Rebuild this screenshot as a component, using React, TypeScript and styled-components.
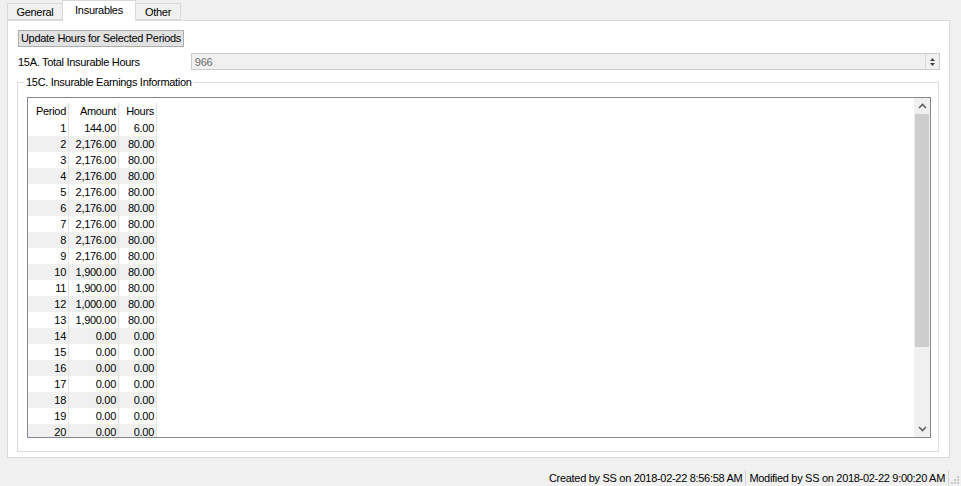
import React from "react";
import styled, { createGlobalStyle } from "styled-components";

const Global = createGlobalStyle`
  html, body { margin: 0; padding: 0; background: #f0f0f0; }
  body { font-family: "Liberation Sans", Arial, sans-serif; font-size: 11px; letter-spacing: -0.3px; color: #000; }
  * { box-sizing: border-box; }
`;

const Window = styled.div`
  width: 961px;
  height: 486px;
  background: #f0f0f0;
  display: flex;
  flex-direction: column;
  overflow: hidden;
`;

const TabBar = styled.div`
  height: 20px;
  padding-left: 8px;
  display: flex;
  align-items: flex-end;
  position: relative;
  z-index: 1;
`;

const Tab = styled.div<{ $active?: boolean; $w: number }>`
  height: ${(p) => (p.$active ? "21px" : "17px")};
  margin-bottom: ${(p) => (p.$active ? "-1px" : "0")};
  padding-top: ${(p) => (p.$active ? "3px" : "2px")};
  background: ${(p) => (p.$active ? "#ffffff" : "#f0f0f0")};
  border: 1px solid #d9d9d9;
  border-bottom: ${(p) => (p.$active ? "none" : "1px solid #d9d9d9")};
  margin-left: -1px;
  white-space: nowrap;
  width: ${(p) => p.$w}px;
  text-align: center;
`;

const Panel = styled.div`
  margin-left: 7px;
  width: 943px;
  height: 438px;
  background: #ffffff;
  border: 1px solid #d9d9d9;
  padding: 9px 9px 0 9px;
  display: flex;
  flex-direction: column;
`;

const Button = styled.button`
  align-self: flex-start;
  margin-left: 1px;
  width: 166px;
  height: 17px;
  padding: 0;
  background: #e1e1e1;
  border: 1px solid #adadad;
  font: inherit;
  letter-spacing: inherit;
  color: #000;
  line-height: 15px;
  white-space: nowrap;
`;

const FieldRow = styled.div`
  margin-top: 6px;
  display: flex;
  align-items: center;
  height: 17px;
  padding-left: 1px;
`;

const Label = styled.span`
  width: 173px;
  white-space: nowrap;
`;

const SpinBox = styled.div`
  width: 750px;
  height: 17px;
  background: #f0f0f0;
  border: 1px solid #cccccc;
  display: flex;
  align-items: center;
  justify-content: space-between;
  padding-left: 3px;
  color: #6d6d6d;
`;

const SpinArrows = styled.div`
  width: 14px;
  height: 15px;
  border-left: 1px solid #d9d9d9;
  display: flex;
  flex-direction: column;
  align-items: center;
  justify-content: center;
  gap: 2px;
`;

const Group = styled.fieldset`
  margin: 6px 1px 0 0;
  width: 922px;
  height: 376px;
  border: 1px solid #dcdcdc;
  padding: 8px 8px 8px 9px;
  min-width: 0;
`;

const Legend = styled.legend`
  margin-left: -3px;
  padding: 0 2px;
  line-height: 13px;
`;

const TableFrame = styled.div`
  width: 904px;
  height: 341px;
  border: 1px solid #828790;
  background: #ffffff;
  display: flex;
`;

const Grid = styled.div`
  flex: 1;
  overflow: hidden;
`;

const Row = styled.div<{ $head?: boolean }>`
  display: flex;
  height: ${(p) => (p.$head ? "22px" : "16px")};
  padding-top: ${(p) => (p.$head ? "4px" : "0")};
`;

const Cell = styled.div<{ $w: number; $alt?: boolean }>`
  width: ${(p) => p.$w}px;
  padding-right: 2px;
  height: 100%;
  display: flex;
  align-items: center;
  justify-content: flex-end;
  background: ${(p) => (p.$alt ? "#f0f0f0" : "#ffffff")};
  border-right: 1px solid #e3e3e3;
  white-space: nowrap;
`;

const ScrollBar = styled.div`
  width: 16px;
  background: #f0f0f0;
  display: flex;
  flex-direction: column;
`;

const ScrollBtn = styled.div`
  height: 16px;
  display: flex;
  align-items: center;
  justify-content: center;
`;

const Track = styled.div`
  flex: 1;
  display: flex;
  flex-direction: column;
`;

const Thumb = styled.div`
  height: 233px;
  margin: 0 1px;
  background: #cdcdcd;
`;

const StatusBar = styled.div`
  flex: 1;
  display: flex;
  justify-content: flex-end;
  align-items: flex-end;
  padding-bottom: 0;
`;

const StatusItem = styled.div`
  padding: 0 3px;
  height: 16px;
  line-height: 16px;
  border-right: 1px solid #d4d4d4;
  white-space: nowrap;
`;

const Grip = styled.div`
  width: 12px;
  height: 16px;
  display: flex;
  align-items: flex-end;
  justify-content: flex-end;
  padding: 0 2px 2px 0;
`;

const cols = [41, 50, 38];

const data: [number, string, string][] = [
  [1, "144.00", "6.00"],
  [2, "2,176.00", "80.00"],
  [3, "2,176.00", "80.00"],
  [4, "2,176.00", "80.00"],
  [5, "2,176.00", "80.00"],
  [6, "2,176.00", "80.00"],
  [7, "2,176.00", "80.00"],
  [8, "2,176.00", "80.00"],
  [9, "2,176.00", "80.00"],
  [10, "1,900.00", "80.00"],
  [11, "1,900.00", "80.00"],
  [12, "1,000.00", "80.00"],
  [13, "1,900.00", "80.00"],
  [14, "0.00", "0.00"],
  [15, "0.00", "0.00"],
  [16, "0.00", "0.00"],
  [17, "0.00", "0.00"],
  [18, "0.00", "0.00"],
  [19, "0.00", "0.00"],
  [20, "0.00", "0.00"],
];

const Chevron = ({ up }: { up?: boolean }) => (
  <svg width="9" height="6" viewBox="0 0 9 6">
    <path
      d={up ? "M1 5 L4.5 1.5 L8 5" : "M1 1 L4.5 4.5 L8 1"}
      fill="none"
      stroke="#606060"
      strokeWidth="1.6"
    />
  </svg>
);

const Tri = ({ up }: { up?: boolean }) => (
  <svg width="5" height="3" viewBox="0 0 5 3">
    <path d={up ? "M0 3 L2.5 0 L5 3 Z" : "M0 0 L2.5 3 L5 0 Z"} fill="#404040" />
  </svg>
);

export default function App() {
  return (
    <Window>
      <Global />
      <TabBar>
        <Tab $w={56}>General</Tab>
        <Tab $active $w={74}>Insurables</Tab>
        <Tab $w={46}>Other</Tab>
      </TabBar>
      <Panel>
        <Button>Update Hours for Selected Periods</Button>
        <FieldRow>
          <Label>15A. Total Insurable Hours</Label>
          <SpinBox>
            <span>966</span>
            <SpinArrows>
              <Tri up />
              <Tri />
            </SpinArrows>
          </SpinBox>
        </FieldRow>
        <Group>
          <Legend>15C. Insurable Earnings Information</Legend>
          <TableFrame>
            <Grid>
              <Row $head>
                <Cell $w={cols[0]}>Period</Cell>
                <Cell $w={cols[1]}>Amount</Cell>
                <Cell $w={cols[2]}>Hours</Cell>
              </Row>
              {data.map(([p, a, h]) => {
                const alt = p % 2 === 0;
                return (
                  <Row key={p}>
                    <Cell $w={cols[0]} $alt={alt}>{p}</Cell>
                    <Cell $w={cols[1]} $alt={alt}>{a}</Cell>
                    <Cell $w={cols[2]} $alt={alt}>{h}</Cell>
                  </Row>
                );
              })}
            </Grid>
            <ScrollBar>
              <ScrollBtn><Chevron up /></ScrollBtn>
              <Track><Thumb /></Track>
              <ScrollBtn><Chevron /></ScrollBtn>
            </ScrollBar>
          </TableFrame>
        </Group>
      </Panel>
      <StatusBar>
        <StatusItem>Created by SS on 2018-02-22 8:56:58 AM</StatusItem>
        <StatusItem>Modified by SS on 2018-02-22 9:00:20 AM</StatusItem>
        <Grip>
          <svg width="8" height="8" viewBox="0 0 8 8">
            {[[6, 0], [6, 3], [3, 3], [6, 6], [3, 6], [0, 6]].map(([x, y], i) => (
              <rect key={i} x={x} y={y} width="2" height="2" fill="#c8c8c8" />
            ))}
          </svg>
        </Grip>
      </StatusBar>
    </Window>
  );
}
